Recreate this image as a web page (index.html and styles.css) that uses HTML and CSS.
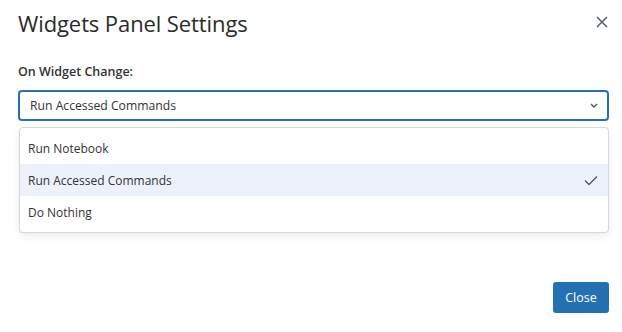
FILE: index.html
```html
<!DOCTYPE html>
<html>
<head>
<meta charset="utf-8">
<link rel="stylesheet" href="styles.css">
</head>
<body>
<div class="modal">
  <div class="header">
    <h1 class="title">Widgets Panel Settings</h1>
    <button class="close-x" aria-label="Close">
      <svg width="12" height="12" viewBox="0 0 12 12"><path d="M1 1L11 11M11 1L1 11" stroke="#4a5560" stroke-width="1.4" fill="none"/></svg>
    </button>
  </div>
  <div class="body">
    <div class="label">On Widget Change:</div>
    <div class="select-wrap">
      <div class="select">
        <span>Run Accessed Commands</span>
        <svg class="chev" width="8" height="5" viewBox="0 0 8 5"><path d="M1 1L4 4L7 1" stroke="#4a5560" stroke-width="1.4" fill="none"/></svg>
      </div>
      <div class="menu">
        <div class="item">Run Notebook</div>
        <div class="item active">Run Accessed Commands
          <svg class="check" width="14" height="11" viewBox="0 0 14 11"><path d="M1 5.5L5 9.5L13 1.5" stroke="#4a5560" stroke-width="1.3" fill="none"/></svg>
        </div>
        <div class="item">Do Nothing</div>
      </div>
    </div>
    <div class="under-btn"></div>
  </div>
  <div class="footer">
    <button class="btn-primary">Close</button>
  </div>
</div>
</body>
</html>
```
FILE: styles.css
```css
html, body {
  margin: 0;
  padding: 0;
  background: #fff;
}
body {
  font-family: "Open Sans", "Noto Sans", sans-serif;
  color: #333;
}
.modal {
  width: 622px;
  height: 332px;
  box-sizing: border-box;
  padding: 8px 13px 19px 18px;
  display: flex;
  flex-direction: column;
}
.header {
  display: flex;
  justify-content: space-between;
  align-items: center;
  height: 30px;
}
.title {
  margin: 0;
  font-size: 22px;
  font-weight: 400;
  line-height: 30px;
  color: #2b2b2b;
  letter-spacing: -0.1px;
}
.close-x {
  border: 0;
  background: none;
  padding: 0;
  width: 14px;
  height: 14px;
  margin-top: -2px;
  display: flex;
  align-items: center;
  justify-content: center;
}
.body {
  margin-top: 26px;
  flex: 1;
}
.label {
  font-size: 12.5px;
  font-weight: 600;
  line-height: 16px;
  color: #333;
}
.select-wrap {
  position: relative;
  margin-top: 10px;
}
.select {
  height: 31px;
  box-sizing: border-box;
  border: 2px solid #2470b3;
  border-radius: 4px;
  display: flex;
  align-items: center;
  justify-content: space-between;
  padding: 0 9px 0 10px;
  font-size: 12.2px;
}
.menu {
  position: absolute;
  left: 1px;
  right: 0;
  top: 37px;
  background: #fff;
  border: 1px solid #d4d9e0;
  border-radius: 4px;
  padding: 4px 0;
  box-shadow: 0 3px 8px rgba(0,0,0,0.08);
  z-index: 2;
}
.item {
  height: 32px;
  display: flex;
  align-items: center;
  justify-content: space-between;
  padding: 0 10px 0 8px;
  font-size: 12px;
}
.item.active {
  background: #edf2fa;
}
.under-btn {
  margin-top: 82px;
  margin-left: 1px;
  width: 97px;
  height: 30px;
  box-sizing: border-box;
  border: 1px solid #c8cdd3;
  border-radius: 4px;
}
.footer {
  display: flex;
  justify-content: flex-end;
}
.btn-primary {
  width: 56px;
  height: 31px;
  border: 0;
  border-radius: 3px;
  background: #2570b3;
  color: #fff;
  font-family: inherit;
  font-size: 12.5px;
  padding: 0;
}
```
